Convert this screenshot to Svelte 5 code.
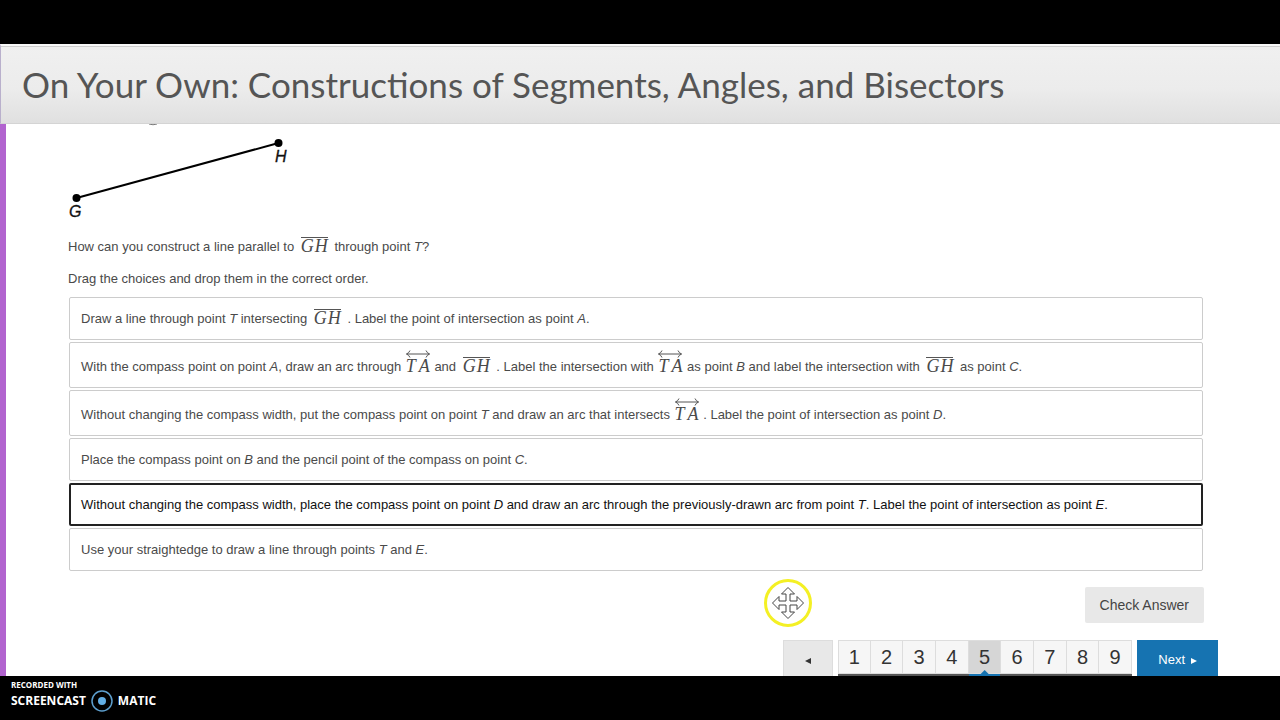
<script>
  const gh = { seg: 'GH' };
  const ta = { line: 'TA' };
  const choices = [
    ['Draw a line through point ', { i: 'T' }, ' intersecting ', gh, ' . Label the point of intersection as point ', { i: 'A' }, '.'],
    ['With the compass point on point ', { i: 'A' }, ', draw an arc through ', ta, ' and ', gh, ' . Label the intersection with ', ta, ' as point ', { i: 'B' }, ' and label the intersection with ', gh, ' as point ', { i: 'C' }, '.'],
    ['Without changing the compass width, put the compass point on point ', { i: 'T' }, ' and draw an arc that intersects ', ta, ' . Label the point of intersection as point ', { i: 'D' }, '.'],
    ['Place the compass point on ', { i: 'B' }, ' and the pencil point of the compass on point ', { i: 'C' }, '.'],
    ['Without changing the compass width, place the compass point on point ', { i: 'D' }, ' and draw an arc through the previously-drawn arc from point ', { i: 'T' }, '. Label the point of intersection as point ', { i: 'E' }, '.'],
    ['Use your straightedge to draw a line through points ', { i: 'T' }, ' and ', { i: 'E' }, '.']
  ];
  const question = ['How can you construct a line parallel to ', gh, ' through point ', { i: 'T' }, '?'];
  const pages = [1, 2, 3, 4, 5, 6, 7, 8, 9];
  let selected = $state(4);
  let current = $state(5);
</script>

{#snippet rich(parts)}{#each parts as p}{#if typeof p === 'string'}{p}{:else if p.i}<i>{p.i}</i>{:else if p.seg}<span class="math seg"><span>G</span><span>H</span></span>{:else}<span class="math ray"><svg class="arrow" viewBox="0 0 24 8" aria-hidden="true"><path d="M.5 4H23.5M4 .5Q3 3 .5 4Q3 5 4 7.5M20 .5Q21 3 23.500 4Q21 5 20 7.500" /></svg><span>T</span><span>A</span></span>{/if}{/each}{/snippet}

<div class="frame">
  <header><h1>On Your Own: Constructions of Segments, Angles, and Bisectors</h1></header>

  <main>
    <svg class="figure" width="240" height="100" viewBox="0 0 240 100" role="img" aria-label="Segment GH">
      <path d="M81 0q4 1.500 8 0" fill="none" stroke="#777" />
      <path d="M8.500 74L210.500 19" stroke="#000" stroke-width="2" />
      <circle cx="8.500" cy="74" r="4" />
      <circle cx="210.500" cy="19" r="4" />
      <text x="1" y="93">G</text>
      <text x="207" y="38">H</text>
    </svg>

    <p class="question">{@render rich(question)}</p>
    <p class="hint">Drag the choices and drop them in the correct order.</p>

    <ol class="choices">
      {#each choices as c, n}
        <li><button class="choice" class:tall={c.includes(ta)} class:selected={selected === n} onclick={() => (selected = n)}>{@render rich(c)}</button></li>
      {/each}
    </ol>

    <div class="actions"><button class="check">Check Answer</button></div>

    <nav aria-label="Questions">
      <button class="prev" aria-label="Previous"><svg width="6" height="6" viewBox="0 0 6 6"><path d="M6 0V6L0 3z" /></svg></button>
      <div class="pages">
        {#each pages as p}
          <button class="page" class:current={current === p} onclick={() => (current = p)}>{p}</button>
        {/each}
      </div>
      <button class="next">Next <svg width="6" height="6" viewBox="0 0 6 6"><path d="M0 0V6L6 3z" /></svg></button>
    </nav>
  </main>

  <footer>
    <small>RECORDED WITH</small>
    <div class="brand">
      <span>SCREENCAST</span>
      <svg width="22" height="22" viewBox="0 0 22 22" aria-hidden="true">
        <circle cx="11" cy="11" r="10" fill="none" stroke="#5d9fce" stroke-width="1.500" />
        <circle cx="11" cy="11" r="4" fill="#62aee4" />
      </svg>
      <span>MATIC</span>
    </div>
  </footer>

  <svg class="cursor" width="50" height="50" viewBox="0 0 50 50" aria-hidden="true">
    <circle cx="25" cy="25" r="22.500" fill="none" stroke="#f4f024" stroke-width="3" />
    <path d="M25 9.500L31.500 16H27V23H34V18.500L40.500 25L34 31.500V27H27V34H31.500L25 40.500L18.500 34H23V27H16V31.500L9.500 25L16 18.500V23H23V16H18.500Z" fill="#fff" stroke="#444" />
  </svg>
</div>

<style>
  :global(body) { margin: 0; background: #000; }
  .frame {
    position: relative;
    box-sizing: border-box;
    height: 100vh;
    padding-top: 44px;
    display: flex;
    flex-direction: column;
    overflow: hidden;
    background: #000;
    font-family: "Liberation Sans", Arial, sans-serif;
    font-size: 13px;
    color: #4a4a4a;
  }
  header {
    padding: 17px 22px 18px 21px;
    border-top: 2px solid #f8f8f8;
    border-bottom: 1px solid #d4d4d4;
    border-left: 1px solid #b9b0cc;
    background: linear-gradient(#f0f0f0, #ececec 55%, #e0e0e0);
    box-shadow: inset 0 1px #cfcfcf;
  }
  h1 {
    margin: 0;
    font: 400 35px/42px Lato, sans-serif;
    color: #555;
  }
  main {
    flex: 1;
    min-height: 0;
    overflow: hidden;
    box-sizing: border-box;
    padding: 0 62px;
    border-left: 6px solid #b264cf;
    background: #fff;
  }
  .figure { display: block; }
  .figure text { font: italic 16px "Liberation Sans", sans-serif; fill: #111; stroke: #111; stroke-width: .3px; }
  p { margin: 0; line-height: 20px; }
  .question { padding-top: 13px; }
  .hint { padding-top: 12px; }
  .math {
    position: relative;
    display: inline-flex;
    vertical-align: -1px;
    height: 15px;
    font: italic 18px/16px "Liberation Serif", serif;
  }
  .seg { gap: 1px; margin: 0 3px; }
  .seg::before {
    content: "";
    position: absolute;
    left: 0;
    right: 0;
    top: -1px;
    height: 1px;
    background: #555;
  }
  .ray { gap: 3px; margin: 0 1px; }
  .arrow {
    position: absolute;
    left: 0;
    top: -8px;
    width: 24px;
    height: 8px;
    fill: none;
    stroke: #555;
  }
  .choices {
    list-style: none;
    margin: 0;
    padding: 8px 15px 0 1px;
    display: flex;
    flex-direction: column;
    gap: 2px;
  }
  button { font: inherit; color: inherit; border: 0; margin: 0; cursor: pointer; }
  .choice {
    display: block;
    width: 100%;
    padding: 11px;
    text-align: left;
    line-height: 19px;
    background: #fff;
    border: 1px solid #ccc;
    border-radius: 2px;
  }
  .tall { padding-top: 14px; }
  .selected { border: 2px solid #222; padding: 10px; color: #111; }
  .actions { display: flex; justify-content: flex-end; padding: 16px 14px 17px 0; }
  .check { padding: 8px 15px; font-size: 14px; line-height: 20px; background: #e8e8e8; color: #444; border-radius: 2px; }
  nav { display: flex; justify-content: flex-end; gap: 5px; }
  .prev, .next { height: 38px; padding: 0; }
  .prev { width: 50px; background: #e8e8e8; border: 1px solid #ddd; fill: #333; }
  .next { width: 81px; background: #1673b1; color: #fff; fill: #fff; }
  .next svg { margin-left: 2px; }
  .pages {
    display: grid;
    grid-template-columns: repeat(9, 1fr);
    width: 294px;
    border-bottom: 4px solid #555;
  }
  .page {
    position: relative;
    padding: 0;
    font-size: 20px;
    line-height: 32px;
    color: #333;
    background: #f6f6f6;
    border: 1px solid #ddd;
    border-left-width: 0;
  }
  .page:first-child { border-left-width: 1px; }
  .current { background: #d6d6d6; }
  .current::before {
    content: "";
    position: absolute;
    left: 0;
    right: 0;
    bottom: -5px;
    height: 8px;
    background: #1673b1;
    clip-path: polygon(0 4px, 12px 4px, 16px 0, 20px 4px, 100% 4px, 100% 100%, 0 100%);
  }
  footer { padding: 4px 11px 8px; color: #fff; font: 700 12px/22px "Open Sans", sans-serif; }
  small { display: block; font-size: 8px; line-height: 10px; }
  .brand { display: flex; gap: 5px; }
  .cursor { position: absolute; left: 763px; top: 578px; }
</style>
